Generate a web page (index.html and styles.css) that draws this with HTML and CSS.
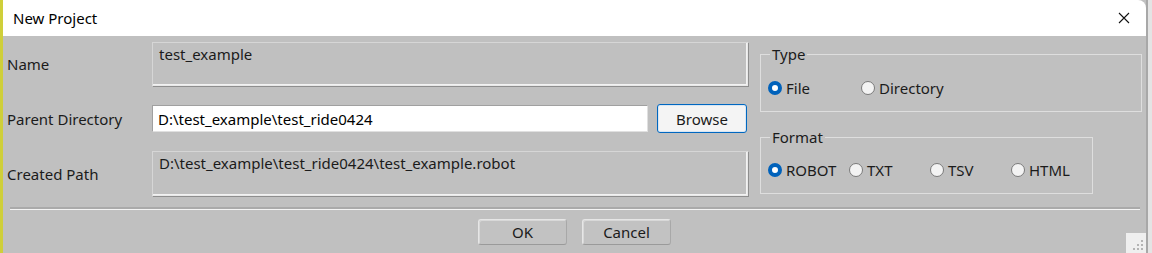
FILE: index.html
```html
<!DOCTYPE html>
<html>
<head>
<meta charset="utf-8">
<link rel="stylesheet" href="styles.css">
</head>
<body>
<div class="screen">
  <div class="edge-left"></div>
  <div class="window">
    <div class="titlebar">
      <span class="title">New Project</span>
      <svg class="close" width="12" height="12" viewBox="0 0 12 12"><path d="M1 1 L11 11 M11 1 L1 11" stroke="#111" stroke-width="1.1" fill="none"/></svg>
    </div>
    <div class="content">
      <div class="form">
        <div class="label">Name</div>
        <div class="field ro tall">test_example</div>
        <div class="label">Parent Directory</div>
        <div class="pathrow">
          <div class="field input">D:\test_example\test_ride0424</div>
          <div class="btn browse">Browse</div>
        </div>
        <div class="label">Created Path</div>
        <div class="field ro tall">D:\test_example\test_ride0424\test_example.robot</div>
      </div>
      <div class="side">
        <fieldset class="group type">
          <legend>Type</legend>
          <div class="radios">
            <span class="radio on"><i></i>File</span>
            <span class="radio"><i></i>Directory</span>
          </div>
        </fieldset>
        <fieldset class="group format">
          <legend>Format</legend>
          <div class="radios">
            <span class="radio on r1"><i></i>ROBOT</span>
            <span class="radio r2"><i></i>TXT</span>
            <span class="radio r3"><i></i>TSV</span>
            <span class="radio"><i></i>HTML</span>
          </div>
        </fieldset>
      </div>
    </div>
    <div class="sep"></div>
    <div class="buttons">
      <div class="btn plain">OK</div>
      <div class="btn plain">Cancel</div>
    </div>
    <svg class="grip" width="20" height="20" viewBox="0 0 20 20">
      <rect width="20" height="20" fill="#efefef"/>
      <g fill="#b4b4b4">
        <rect x="15" y="7" width="2" height="2"/>
        <rect x="11" y="11" width="2" height="2"/><rect x="15" y="11" width="2" height="2"/>
        <rect x="7" y="15" width="2" height="2"/><rect x="11" y="15" width="2" height="2"/><rect x="15" y="15" width="2" height="2"/>
      </g>
    </svg>
  </div>
  <div class="edge-right"></div>
</div>
</body>
</html>
```
FILE: styles.css
```css
* { box-sizing: border-box; }
html, body { margin: 0; padding: 0; }
body {
  width: 1152px; height: 253px; overflow: hidden;
  font-family: "Noto Sans", "Open Sans", sans-serif;
  font-size: 15px; color: #1b1b1b;
  background: #e6e6e6;
}
.screen { display: flex; height: 253px; }
.edge-left { width: 3px; background: #cfcf3a; }
.edge-right { flex: 1; background: #e4e4e4; }
.window {
  position: relative;
  width: 1145px; display: flex; flex-direction: column;
  background: #c0c0c0;
  border-right: 2px solid #a8a8a8;
}
.titlebar {
  height: 36px; background: #fff;
  display: flex; align-items: center; justify-content: space-between;
  padding: 0 14px 0 10px;
  border-top-right-radius: 8px;
}
.title { font-size: 15px; color: #000; }
.close { margin-right: 2px; }
.content { display: flex; padding: 6px 0 0 4px; height: 171px; }
.form {
  display: grid;
  grid-template-columns: 145px 596px;
  grid-template-rows: 44px 29px 45px;
  row-gap: 18px;
  align-items: center;
}
.label { line-height: 20px; }
.field { height: 100%; padding: 4px 6px; line-height: 18px; }
.ro {
  background: #c0c0c0;
  border: 1px solid #e8e8e8;
  border-top-color: #d6d6d6; border-left-color: #d6d6d6;
  box-shadow: inset -1px -1px 0 #f2f2f2, 1px 1px 0 #8e8e8e;
  align-self: stretch;
}
.tall { padding-top: 2px; }
.pathrow { display: flex; gap: 9px; height: 29px; align-items: center; }
.input {
  width: 496px; height: 27px; background: #fff;
  border: 1px solid #a0a0a0; border-bottom-color: #e0e0e0; border-right-color: #e0e0e0;
  padding: 3px 5px; line-height: 20px; color: #000;
}
.btn {
  display: flex; align-items: center; justify-content: center;
  border-radius: 3px;
}
.browse {
  width: 90px; height: 29px; background: #f4f4f4;
  border: 1px solid #0067c0;
  box-shadow: inset 0 0 0 1px #d8e6f3;
}
.side { margin-left: 12px; display: flex; flex-direction: column; gap: 16px; padding-top: 3px; }
.group {
  margin: 0; padding: 0 0 0 7px;
  border: 1px solid #dedede;
  border-radius: 0;
  min-width: 0;
}
.group legend { padding: 0 2px; margin-left: 2px; line-height: 18px; }
.type { width: 382px; height: 67px; }
.format { width: 333px; height: 66px; }
.radios { display: flex; align-items: center; height: 40px; margin-top: 5px; }
.format .radios { margin-top: 4px; }
.radio { display: inline-flex; align-items: center; line-height: 18px; }
.radio i {
  display: inline-block; width: 14px; height: 14px; border-radius: 50%;
  background: #f3f3f3; border: 1px solid #7a7a7a; margin-right: 4px;
}
.radio.on i { background: #fff; border: 4px solid #0062bb; }
.type .radio.on { width: 93px; }
.format .r1 { width: 81px; }
.format .r2 { width: 81px; }
.format .r3 { width: 81px; }
.sep {
  margin: 0 6px 0 7px; height: 3px;
  border-top: 2px solid #aaaaaa; border-bottom: 1px solid #f4f4f4;
}
.buttons { display: flex; justify-content: center; gap: 15px; padding: 9px 0 0 0; }
.plain {
  width: 89px; height: 26px; background: #c2c2c2;
  border: 1px solid #e6e6e6; border-bottom-color: #9a9a9a; border-right-color: #a8a8a8;
  box-shadow: inset 1px 1px 0 #d8d8d8;
}
.grip { position: absolute; right: 0; bottom: 0; }
```
